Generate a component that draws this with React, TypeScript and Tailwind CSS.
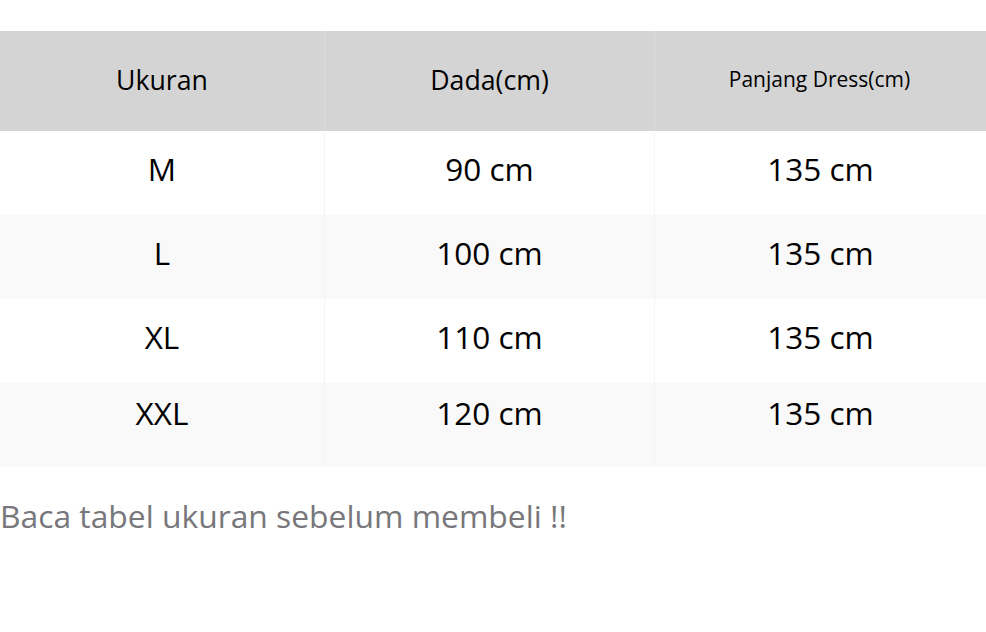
const rows = [
  { size: "M", chest: "90 cm", length: "135 cm" },
  { size: "L", chest: "100 cm", length: "135 cm" },
  { size: "XL", chest: "110 cm", length: "135 cm" },
  { size: "XXL", chest: "120 cm", length: "135 cm" },
];

const App = () => {
  return (
    <div className="w-[986px] h-[632px] bg-white text-black font-['Open_Sans','Noto_Sans',sans-serif]">
      <div className="pt-[31px]">
        <div className="grid grid-cols-[325px_330px_1fr] h-[100px] bg-[#d4d4d4]">
          <div className="flex items-center justify-center border-r border-[#dcdcdc] text-[26.7px] pb-[2px]">
            Ukuran
          </div>
          <div className="flex items-center justify-center border-r border-[#dcdcdc] text-[26.7px] pb-[2px]">
            Dada(cm)
          </div>
          <div className="flex items-center justify-center text-[21px] pr-[2px] pb-[2px]">
            Panjang Dress(cm)
          </div>
        </div>
        {rows.map((row, idx) => {
          const last = idx === rows.length - 1;
          const cell = `flex items-center justify-center ${last ? "pb-[24px]" : "pb-[9px]"}`;
          return (
            <div
              key={row.size}
              className={`grid grid-cols-[325px_330px_1fr] h-[84px] text-[31.5px] ${
                idx % 2 === 1 ? "bg-[#f9f9f9]" : "bg-white"
              }`}
            >
              <div className={`${cell} border-r border-[#f4f4f4]`}>{row.size}</div>
              <div className={`${cell} border-r border-[#f4f4f4]`}>{row.chest}</div>
              <div className={cell}>{row.length}</div>
            </div>
          );
        })}
      </div>
      <p className="mt-[28px] text-[31.8px] leading-[42px] text-[#77777c]">
        Baca tabel ukuran sebelum membeli !!
      </p>
    </div>
  );
};

export default App;
